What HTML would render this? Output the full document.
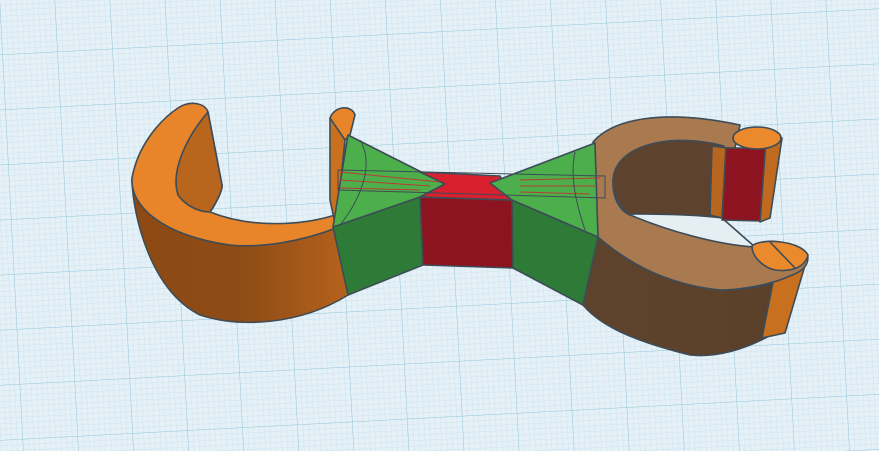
<!DOCTYPE html>
<html><head><meta charset="utf-8"><style>
html,body{margin:0;padding:0;width:879px;height:451px;overflow:hidden;background:#e9f3f8}
svg{display:block}
</style></head><body>
<svg width="879" height="451" viewBox="0 0 879 451" xmlns="http://www.w3.org/2000/svg">
<defs>
<pattern id="minor" width="5.5" height="5.5" patternUnits="userSpaceOnUse" patternTransform="rotate(-3)">
<path d="M5.5 0V5.5M0 5.5H5.5" stroke="#c4e0eb" stroke-width="0.8" fill="none"/>
</pattern>
<pattern id="major" width="55" height="55" patternUnits="userSpaceOnUse" patternTransform="rotate(-3)">
<path d="M55 0V55M0 55H55" stroke="#95c9dc" stroke-width="1" fill="none"/>
</pattern>
<linearGradient id="lside" x1="0" x2="1" y1="0" y2="0">
<stop offset="0" stop-color="#8f4a14"/><stop offset="0.5" stop-color="#8d4b16"/><stop offset="1" stop-color="#b6621c"/>
</linearGradient>
<linearGradient id="rside" x1="0" x2="1">
<stop offset="0" stop-color="#5e432c"/><stop offset="1" stop-color="#5a402a"/>
</linearGradient>
</defs>
<rect width="879" height="451" fill="#e6f1f7"/>
<rect width="879" height="451" fill="url(#minor)"/>
<rect width="879" height="451" fill="url(#major)"/>

<g stroke="#3d4c57" stroke-width="1.6" stroke-linejoin="round">
<path d="M132,180 C133,215 150,290 200,315 C240,328 300,325 348,295 L336,228 C300,242 260,248 230,245 C160,235 133,205 132,180 Z" fill="url(#lside)"/>
<path fill-rule="evenodd" d="M178,108 C190,100 205,103 208,112 L222,185 C223,190 215,205 210,212 C250,228 300,226 335,215 L333,130 L330,118 C335,105 352,105 355,115 L350,135 L345,140 L336,228 C300,242 260,248 230,245 C160,235 130,205 132,178 C138,145 160,120 178,108 Z" fill="#e8842a"/>
<path d="M208,112 C188,135 170,170 178,195 C185,205 198,212 210,212 C215,205 223,190 222,185 Z" fill="#b8651e"/>
<path d="M330,118 L345,140 L336,228 L330,200 Z" fill="#c9711f"/>

<path d="M598,237 L583,305 C600,325 630,340 690,355 C720,358 750,348 780,330 L800,270 C790,282 750,290 720,290 C670,285 630,265 598,237 Z" fill="url(#rside)"/>
<path d="M775,272 L806,262 L785,333 L762,338 Z" fill="#c9701f"/>
<path d="M593,142 C612,120 660,108 740,125 L735,148 L725,148 C680,135 620,140 613,180 C612,198 620,210 628,214 C670,232 720,245 755,247 L808,257 C808,268 800,272 790,276 C770,285 740,290 720,290 C670,285 630,265 598,237 Z" fill="#a97a50"/>
<path d="M613,180 C615,145 670,132 724,146 L722,218 C690,214 650,214 628,214 C618,205 613,193 613,180 Z" fill="#5d432e"/>
<path d="M628,214 C660,214 700,215 722,218 L755,247 C720,245 670,232 628,214 Z" fill="#e4eef3"/>
<path d="M712,146 L726,148 L722,218 L710,215 Z" fill="#b8661f"/>
<path d="M726,148 L768,148 L760,221 L722,220 Z" fill="#8d1420"/>
<path d="M766,140 L782,138 L770,218 L760,222 Z" fill="#c06a1f"/>
<ellipse cx="757" cy="138" rx="24" ry="11" fill="#eb8a2d"/>
<path d="M752,246 C760,238 800,240 808,255 C805,268 790,272 775,270 C765,268 752,258 752,246 Z" fill="#eb8a2d"/>
<path d="M770,242 L795,268" fill="none"/>

<path d="M333,227 L420,197 L423,265 L348,295 Z" fill="#2e7a37"/>
<path d="M348,135 L445,184 L420,197 L333,227 Z" fill="#4caf4c"/>
<path d="M420,197 L512,200 L513,268 L423,265 Z" fill="#8c1420"/>
<path d="M420,197 L445,184 L420,172 L500,176 L512,200 Z" fill="#d9202f"/>
<path d="M512,200 L598,237 L583,305 L513,268 Z" fill="#2e7a37"/>
<path d="M490,183 L595,143 L598,237 L512,200 Z" fill="#4caf4c"/>
</g>
<g stroke="#d4202e" stroke-width="1" opacity="0.8">
<path d="M340,172 L440,182 M340,180 L430,186 M340,188 L420,190 M520,180 L600,178 M520,186 L595,186 M520,192 L590,194"/>
</g>
<g fill="none" stroke="#3d4c57" stroke-width="1">
<path d="M338,170 L605,176 L605,198 L338,190 Z"/>
<path d="M575,152 C570,175 575,200 585,230"/>
<path d="M360,140 C375,165 360,200 340,225"/>
</g>
</svg>
</body></html>
